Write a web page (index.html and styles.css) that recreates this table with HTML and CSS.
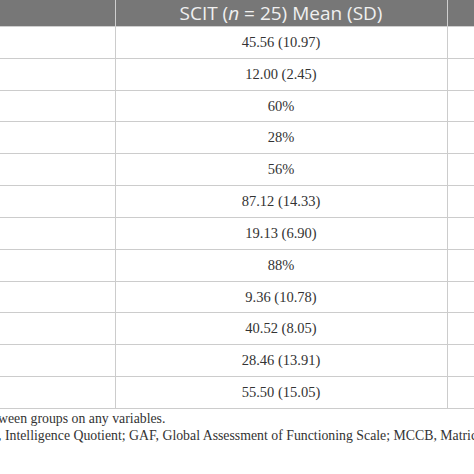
FILE: index.html
```html
<!DOCTYPE html>
<html>
<head>
<meta charset="utf-8">
<link rel="stylesheet" href="styles.css">
</head>
<body>
<div class="page">
  <table class="data">
    <colgroup>
      <col class="c-label">
      <col class="c-scit">
      <col class="c-next">
    </colgroup>
    <thead>
      <tr>
        <th></th>
        <th>SCIT (<i>n</i> = 25) Mean (SD)</th>
        <th></th>
      </tr>
    </thead>
    <tbody>
      <tr><td></td><td>45.56 (10.97)</td><td></td></tr>
      <tr><td></td><td>12.00 (2.45)</td><td></td></tr>
      <tr><td></td><td>60%</td><td></td></tr>
      <tr><td></td><td>28%</td><td></td></tr>
      <tr><td></td><td>56%</td><td></td></tr>
      <tr><td></td><td>87.12 (14.33)</td><td></td></tr>
      <tr><td></td><td>19.13 (6.90)</td><td></td></tr>
      <tr><td></td><td>88%</td><td></td></tr>
      <tr><td></td><td>9.36 (10.78)</td><td></td></tr>
      <tr><td></td><td>40.52 (8.05)</td><td></td></tr>
      <tr><td></td><td>28.46 (13.91)</td><td></td></tr>
      <tr><td></td><td>55.50 (15.05)</td><td></td></tr>
    </tbody>
  </table>
  <div class="notes">
    <p class="note note-first">ween groups on any variables.</p>
    <p class="note">, Intelligence Quotient; GAF, Global Assessment of Functioning Scale; MCCB, Matrics Consensus Cognitive Battery</p>
  </div>
</div>
</body>
</html>
```
FILE: styles.css
```css
html, body {
  margin: 0;
  padding: 0;
  background: #ffffff;
}
body {
  width: 474px;
  height: 474px;
  overflow: hidden;
}
.page {
  width: 474px;
  overflow: hidden;
}
.data {
  border-collapse: collapse;
  table-layout: fixed;
  width: 560px;
  margin-top: -1px;
}
.c-label { width: 115px; }
.c-scit { width: 332px; }
.c-next { width: 113px; }
.data th {
  background: #777777;
  color: #f0f0f0;
  font-family: "Open Sans", "Noto Sans", sans-serif;
  font-weight: 400;
  font-size: 19px;
  height: 27px;
  padding: 0;
  text-align: center;
  vertical-align: middle;
  border: 1px solid #cfcfcf;
  border-top: none;
}
.data th:first-child { border-left: none; }
.data th i { font-style: italic; }
.data td {
  font-family: "Liberation Serif", "Times New Roman", serif;
  font-size: 14.5px;
  color: #333333;
  text-align: center;
  vertical-align: middle;
  height: 30.83px;
  padding: 0;
  border: 1px solid #cccccc;
}
.data td:first-child { border-left: none; }
.notes {
  padding-top: 1px;
}
.note {
  margin: 0 0 0 -2px;
  font-family: "Liberation Serif", "Times New Roman", serif;
  font-size: 13.8px;
  letter-spacing: 0;
  line-height: 17px;
  color: #333333;
  white-space: nowrap;
}
```
